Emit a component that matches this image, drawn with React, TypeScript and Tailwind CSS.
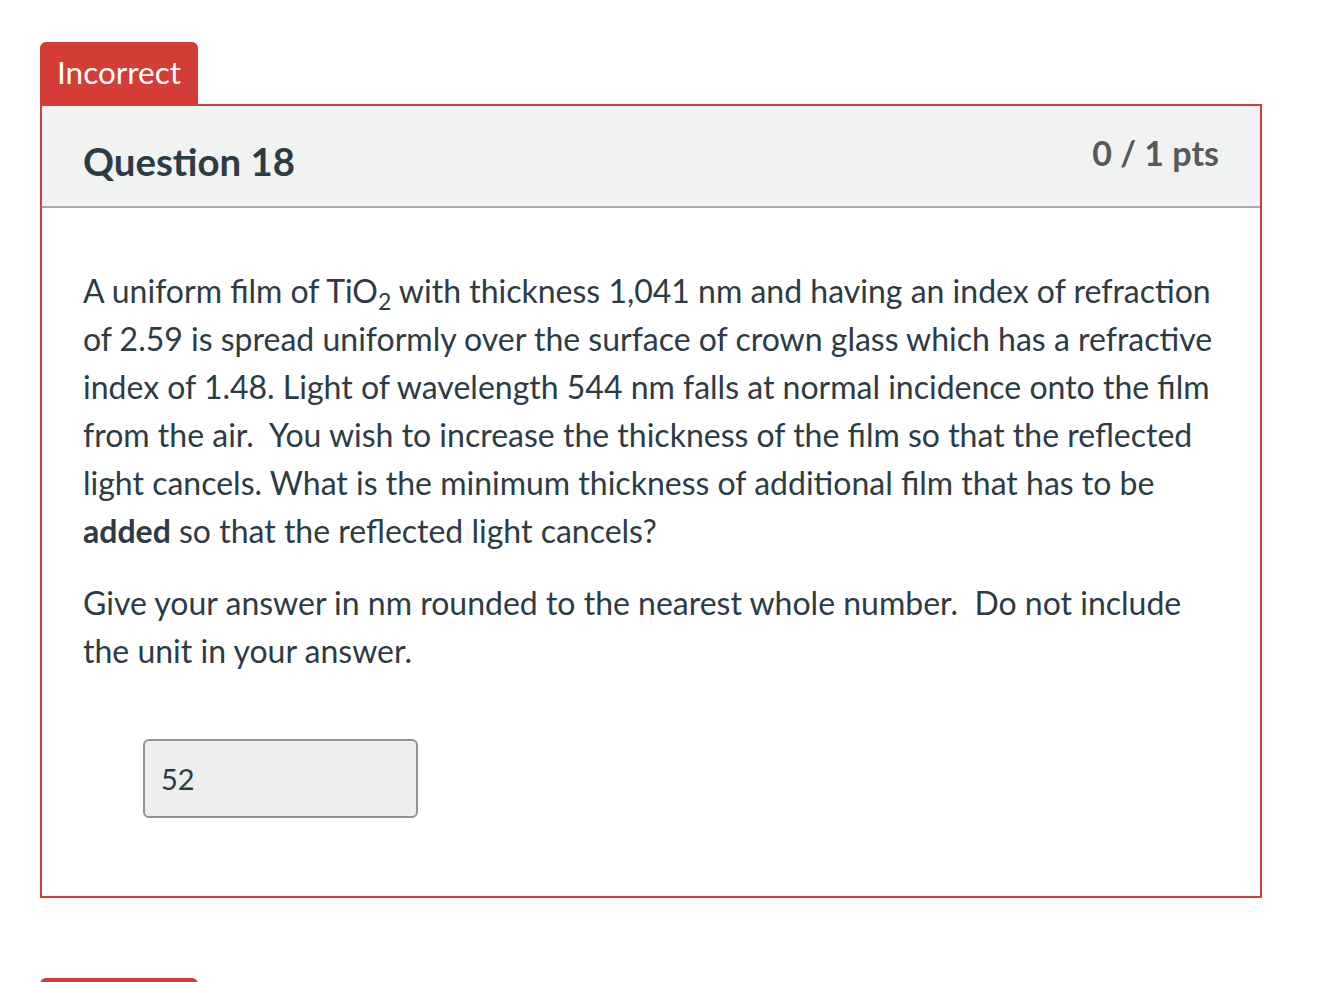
import React from "react";

export default function App() {
  return (
    <div className="min-h-screen bg-white" style={{ fontFamily: "Lato, 'Noto Sans', sans-serif" }}>
      <div className="pt-[42px] pl-[40px] w-[1262px]">
        <div className="flex">
          <div className="h-[62px] w-[158px] bg-[#d43c36] rounded-t-[6px] pl-[17px] flex items-center text-white text-[31.5px] leading-none">
            Incorrect
          </div>
        </div>
        <div className="border-2 border-[#d43c36] h-[794px] flex flex-col">
          <div className="h-[102px] bg-[#f1f2f2] border-b-2 border-[#aaaaaa] px-[41px] flex justify-between">
            <div className="pt-[31px] text-[38.4px] font-bold text-[#2d3b45] leading-[48px]">Question 18</div>
            <div className="pt-[27px] text-[34px] font-bold text-[#595959] leading-[40px]">0 / 1 pts</div>
          </div>
          <div className="px-[41px] pt-[59px] text-[#2d3b45] text-[32px] leading-[48px]">
            <p>
              A uniform film of TiO<sub className="text-[23px] align-baseline relative top-[7px]">2</sub> with thickness 1,041 nm and having an index of refraction of 2.59 is spread uniformly over the surface of crown glass which has a refractive index of 1.48. Light of wavelength 544 nm falls at normal incidence onto the film from the air.&nbsp; You wish to increase the thickness of the film so that the reflected light cancels. What is the minimum thickness of additional film that has to be <b className="font-bold">added</b> so that the reflected light cancels?
            </p>
            <p className="mt-[24px]">
              Give your answer in nm rounded to the nearest whole number.&nbsp; Do not include the unit in your answer.
            </p>
            <div className="mt-[64px] ml-[60px] w-[275px] h-[79px] bg-[#eeeeee] border-2 border-[#8e959c] rounded-[6px] pl-[16px] flex items-center text-[29px] text-[#2d3b45]">
              52
            </div>
          </div>
        </div>
        <div className="mt-[80px] flex">
          <div className="h-[62px] w-[158px] bg-[#d43c36] rounded-t-[6px]" />
        </div>
      </div>
    </div>
  );
}
